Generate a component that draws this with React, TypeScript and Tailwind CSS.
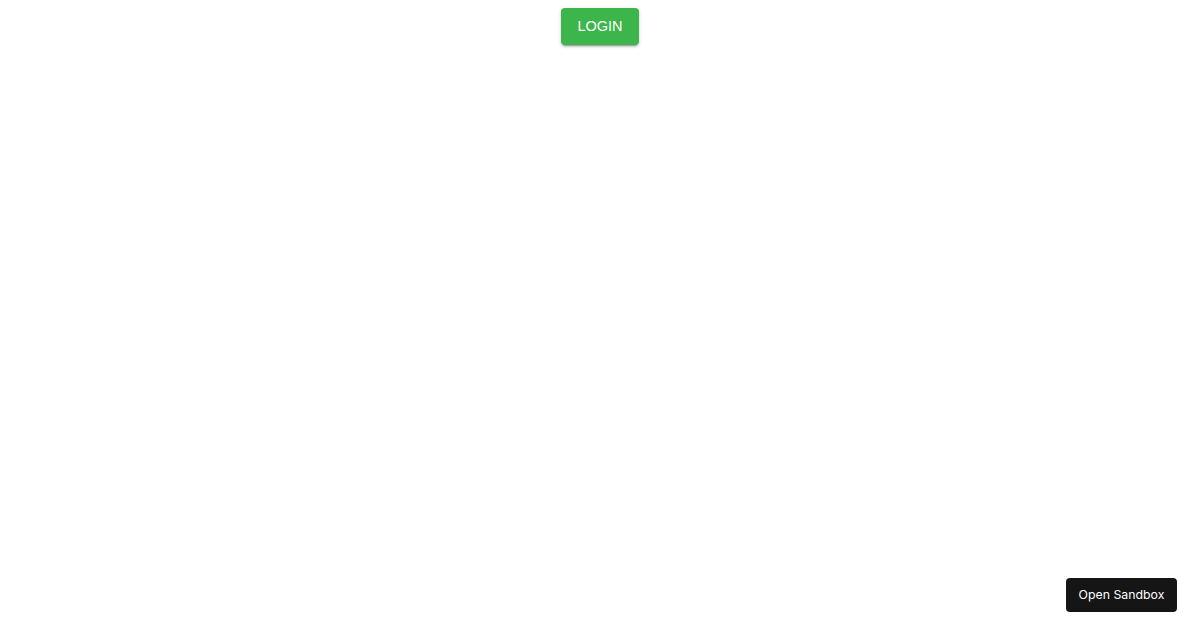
import React from "react";

export default function App() {
  return (
    <div className="relative h-[630px] w-[1200px] bg-white" style={{ fontFamily: "'Liberation Sans', Arial, sans-serif" }}>
      <div className="flex justify-center pt-[8px]">
        <button className="h-[37px] w-[78px] rounded-[4px] bg-[#3cb54a] text-[14.5px] font-normal uppercase text-white shadow-[0_3px_1px_-2px_rgba(0,0,0,0.2),0_2px_2px_0_rgba(0,0,0,0.14),0_1px_5px_0_rgba(0,0,0,0.12)]">
          LOGIN
        </button>
      </div>
      <button
        className="fixed bottom-[18px] right-[23px] h-[34px] w-[111px] rounded-[4px] bg-[#151515] text-[12.3px] text-white"
        style={{ fontFamily: "Inter, 'Liberation Sans', sans-serif" }}
      >
        Open Sandbox
      </button>
    </div>
  );
}
